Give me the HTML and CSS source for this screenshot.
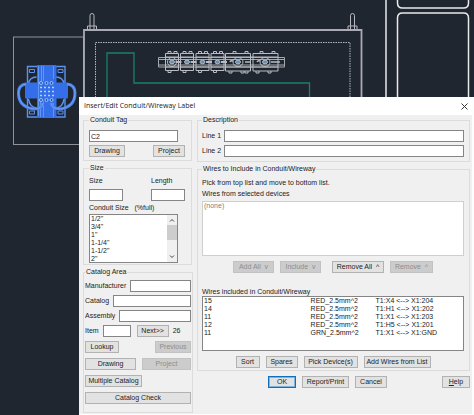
FILE: index.html
```html
<!DOCTYPE html>
<html lang="en">
<head>
<meta charset="utf-8">
<title>Insert/Edit Conduit/Wireway Label</title>
<link rel="stylesheet" href="styles.css">
</head>
<body>
<svg class="drawing" width="474" height="415" viewBox="0 0 474 415" fill="none" aria-hidden="true">
  <defs>
    <g id="terminal" stroke="#b9bcc2">
      <path d="M-6.500-8.500h13v17h-13zM-6.500-5h13M-6.500 5h13"/>
      <path d="M-4-9v-1.500h3V-9M2-9v-1.500h3V-9M-4 9v1.500h3V9"/>
      <ellipse cx="0" cy="0" rx="2.500" ry="1.800" fill="#5d92bd"/>
      <path d="M3.500 0h6" stroke-width="2"/>
    </g>
    <g id="pin" stroke="#b4b7bd">
      <path d="M-2 12.500V2q0-2 2-2t2 2v10.500M-4.500 16v-3.500h9V16M-2 12.500V16M2 12.500V16"/>
    </g>
  </defs>
  <rect x="13.500" y="37" width="70" height="107.500" stroke="#8f9298"/>
  <path d="M84 300V30H361.500V300" stroke="#aaa9b8" stroke-width="1.800"/>
  <path d="M95.500 300V42.500H350V300" stroke="#b5b8bd" stroke-dasharray="1.500 1"/>
  <path d="M107 300V53h27v30h175.500v217" stroke="#17806f" stroke-width="1.300"/>
  <use href="#pin" x="92" y="13.500"/>
  <use href="#pin" x="352.500" y="13.500"/>
  <path d="M158.500 57.500H284.500V67H158.500zM158.500 59.500H284.500M158.500 65H284.500" stroke="#a5a8af"/>
  <use href="#terminal" x="172" y="62"/>
  <use href="#terminal" x="187" y="62"/>
  <use href="#terminal" x="202.500" y="62"/>
  <use href="#terminal" x="217.500" y="62"/>
  <g stroke="#b9bcc2">
    <path d="M225.500 53.500h25v17.500h-25zM253 53.500h25v17.500h-25zM226 57h52M226 67h52"/>
    <path d="M233 53v-1.500h3V53M245 53v-1.500h3V53M260 53v-1.500h3V53M272 53v-1.500h3V53M229 71v2h3v-2M241 71v2h3v-2M245 71v2h3v-2M256 71v2h3v-2M268 71v2h3v-2"/>
    <path d="M230 62q1-2 3-1M257 62q1-2 3-1M245 62h6M271 62h9" stroke-width="1.500"/>
    <ellipse cx="238" cy="62" rx="5" ry="4.500"/>
    <ellipse cx="265" cy="62" rx="5" ry="4.500"/>
    <ellipse cx="172" cy="62" rx="4.500" ry="4.500"/>
    <ellipse cx="238" cy="62" rx="2.500" ry="1.800" fill="#5d92bd"/>
    <ellipse cx="265" cy="62" rx="2.500" ry="1.800" fill="#5d92bd"/>
  </g>
  <g stroke="#e8eaec" stroke-width="1.500">
    <path d="M386 0V300"/>
    <path d="M397.500 0v3q0 5 5 5h61q5 0 5-5V0"/>
    <path d="M397.500 300V18q0-5 5-5h61q5 0 5 5v282"/>
  </g>
  <g stroke="#5b93ee">
    <path d="M27.500 66.500h37.500v50.500H27.500z" stroke-width="1.400"/>
    <path d="M29.500 69.500h5v3h-5zM58 69.500h5v3h-5zM29.500 111h5v3h-5zM58 111h5v3h-5z"/>
    <path d="M28.500 84q1-7 8-7M64 84q-1-7-8-7M28.500 99q1 8 8 9M64 99q-1 8-8 9" stroke-width="1.500"/>
    <path d="M25.500 83h42v15h-42z" fill="#346ee8" stroke="#346ee8"/>
    <path d="M37.500 65.500h18.500V117H37.500z" fill="#346ee8" stroke="#346ee8"/>
    <path d="M38.500 66v50M41.500 66v15M43.500 66v15M40.500 101v16M43.500 101v16M53.500 66v13M53.500 103v14" stroke="#5f98f2"/>
    <path d="M26 84q-7.500 1-7.500 9 0 14 15.500 16 8 0 9-6M67 84q8 1 8 9 0 14-15 16-8 0-9-6" stroke="#4b83ee" stroke-width="3"/>
    <path d="M26 84q-7.500 1-7.500 9 0 14 15.500 16 8 0 9-6M67 84q8 1 8 9 0 14-15 16-8 0-9-6" stroke="#7aabf5" stroke-width=".7"/>
    <g fill="#2351b0" stroke="#a8cbfa" stroke-width=".9">
      <circle cx="41" cy="83" r="1.500"/><circle cx="46.500" cy="83" r="1.500"/><circle cx="51.500" cy="83" r="1.500"/>
      <circle cx="41" cy="100" r="1.500"/><circle cx="46.500" cy="100" r="1.500"/><circle cx="51.500" cy="100" r="1.500"/>
    </g>
    <path d="M40 87.500h14M40 91.500h14M40 95.500h14" stroke="#b5d2fa" stroke-width="1.500" stroke-dasharray="2 2"/>
  </g>
</svg>

<main class="dialog" role="dialog" aria-labelledby="dialog-title">
  <header class="titlebar">
    <h1 id="dialog-title">Insert/Edit Conduit/Wireway Label</h1>
    <button class="close" type="button" aria-label="Close"><svg width="7" height="7" viewBox="0 0 7 7" fill="none" stroke="#333"><path d="M.5.500l6 6M6.500.500l-6 6"/></svg></button>
  </header>
  <form class="body">
    <div class="column">
      <fieldset class="group tag">
        <legend>Conduit Tag</legend>
        <input class="field inset" type="text" value="C2" aria-label="Conduit tag">
        <div class="row spread">
          <button class="w36" type="button">Drawing</button>
          <button class="w32" type="button">Project</button>
        </div>
      </fieldset>

      <fieldset class="group size">
        <legend>Size</legend>
        <div class="row spread">
          <label class="stack">Size<input class="field" type="text"></label>
          <label class="stack">Length<input class="field" type="text"></label>
        </div>
        <label class="caption" for="conduit-size">Conduit Size &nbsp; (%full)</label>
        <div class="list inset sizes">
          <select id="conduit-size" size="6">
            <option>1/2"</option><option>3/4"</option><option>1"</option><option>1-1/4"</option><option>1-1/2"</option><option>2"</option>
          </select>
          <div class="scrollbar" aria-hidden="true">
            <svg width="10" height="10" viewBox="0 0 10 10" fill="none" stroke="#444"><path d="M3 6.500l2-2 2 2"/></svg>
            <div class="thumb"></div>
            <svg width="10" height="10" viewBox="0 0 10 10" fill="none" stroke="#444"><path d="M3 3.500l2 2 2-2"/></svg>
          </div>
        </div>
      </fieldset>

      <fieldset class="group catalog">
        <legend>Catalog Area</legend>
        <div class="rows entries">
          <div class="row"><label for="manufacturer">Manufacturer</label><input id="manufacturer" class="field" type="text"></div>
          <div class="row"><label for="catalog">Catalog</label><input id="catalog" class="field" type="text"></div>
          <div class="row"><label for="assembly">Assembly</label><input id="assembly" class="field" type="text"></div>
          <div class="row"><label for="item">Item</label><input id="item" class="field item" type="text"><button class="w32" type="button">Next&gt;&gt;</button><span>26</span></div>
        </div>
        <div class="rows actions">
          <div class="row spread"><button class="w34" type="button">Lookup</button><button class="w36" type="button" disabled>Previous</button></div>
          <div class="row halves"><button type="button">Drawing</button><button type="button" disabled>Project</button></div>
          <div class="row"><button class="w57" type="button">Multiple Catalog</button></div>
          <button type="button">Catalog Check</button>
        </div>
      </fieldset>
    </div>

    <div class="column">
      <fieldset class="group description">
        <legend>Description</legend>
        <div class="rows">
          <div class="row"><label for="line1">Line 1</label><input id="line1" class="field" type="text"></div>
          <div class="row"><label for="line2">Line 2</label><input id="line2" class="field" type="text"></div>
        </div>
      </fieldset>

      <fieldset class="group wires">
        <legend>Wires to Include in Conduit/Wireway</legend>
        <p>Pick from top list and move to bottom list.</p>
        <label class="caption" for="available">Wires from selected devices</label>
        <div class="list muted">
          <select id="available" size="6" disabled><option>(none)</option></select>
        </div>
        <div class="row move">
          <button class="w41" type="button" disabled>Add All &nbsp;v</button>
          <button class="w41" type="button" disabled>Include &nbsp;v</button>
          <button class="w52" type="button">Remove All &nbsp;^</button>
          <button class="w43" type="button" disabled>Remove &nbsp;^</button>
        </div>
        <div id="included">Wires included in Conduit/Wireway</div>
        <div class="list">
          <table aria-labelledby="included">
            <tbody>
              <tr><td>15</td><td>RED_2.5mm^2</td><td>T1:X4 &lt;--&gt; X1:204</td></tr>
              <tr><td>14</td><td>RED_2.5mm^2</td><td>T1:H1 &lt;--&gt; X1:202</td></tr>
              <tr><td>11</td><td>RED_2.5mm^2</td><td>T1:X1 &lt;--&gt; X1:203</td></tr>
              <tr><td>12</td><td>RED_2.5mm^2</td><td>T1:H5 &lt;--&gt; X1:201</td></tr>
              <tr><td>11</td><td>GRN_2.5mm^2</td><td>T1:X1 &lt;--&gt; X1:GND</td></tr>
            </tbody>
          </table>
        </div>
        <div class="row tools">
          <button class="w24" type="button">Sort</button>
          <button class="w32" type="button">Spares</button>
          <button class="w54" type="button">Pick Device(s)</button>
          <button class="w67" type="button">Add Wires from List</button>
        </div>
      </fieldset>

      <div class="row footer">
        <button class="w28 primary" type="submit">OK</button>
        <button class="w47" type="button">Report/Print</button>
        <button class="w32" type="button">Cancel</button>
        <button class="w28 help" type="button"><u>H</u>elp</button>
      </div>
    </div>
  </form>
</main>
</body>
</html>
```
FILE: styles.css
```css
* {
  box-sizing: border-box;
}

body {
  margin: 0;
  padding: 97px 0 0 79px;
  background: #20262f;
  color: #222;
  font: 7px/8px "Liberation Sans", sans-serif;
}

.drawing {
  position: absolute;
  top: 0;
  left: 0;
}

.dialog {
  position: relative;
  background: #f0f0f0;
  border: solid #fdfdfd;
  border-width: 0 2px 2px 0;
}

.titlebar {
  display: flex;
  align-items: center;
  justify-content: space-between;
  height: 18px;
  padding: 0 3px 0 5px;
  background: #fff;
}

h1 {
  margin: 0;
  font: 7px/10px "Open Sans", sans-serif;
}

.body {
  display: grid;
  grid-template-columns: 110px 1fr;
  gap: 4px;
  padding: 1px 2px 1px 4px;
}

.column,
.rows {
  display: flex;
  flex-direction: column;
  min-width: 0;
}

.column {
  gap: 3px;
}

.rows {
  gap: 3px;
}

.group {
  min-width: 0;
  margin: 0;
  padding: 6px 6px 3px 5px;
  border: 1px solid #dcdcdc;
}

legend {
  margin: 0;
  padding: 0 1px;
  line-height: 8px;
}

.row {
  display: flex;
  align-items: center;
  gap: 6px;
}

.spread {
  justify-content: space-between;
}

.field {
  display: block;
  flex: 1;
  min-width: 0;
  width: 100%;
  height: 12px;
  margin: 0;
  padding: 0 1px;
  border: 1px solid #858585;
  border-radius: 0;
  background: #fff;
  color: #222;
  font: inherit;
  outline: 0;
}

.inset {
  width: calc(100% - 7px);
}

button {
  flex: none;
  height: 12px;
  margin: 0;
  padding: 0;
  border: 1px solid #b2b2b2;
  border-radius: 0;
  background: #e2e2e2;
  color: #222;
  font: inherit;
  line-height: 10px;
  white-space: nowrap;
}

button:disabled {
  background: #cccccc;
  border-color: #c2c2c2;
  color: #8e8e8e;
}

.close {
  display: grid;
  place-items: center;
  width: 9px;
  height: 9px;
  border: 0;
  background: none;
}

.primary {
  border: 1px solid #0f6fbd;
  outline: 1px solid #7fb2dc;
  outline-offset: -2px;
}

.w24 { width: 24px; }
.w28 { width: 28px; }
.w32 { width: 32px; }
.w34 { width: 34px; }
.w36 { width: 36px; }
.w41 { width: 41px; }
.w43 { width: 43px; }
.w47 { width: 47px; }
.w52 { width: 52px; }
.w54 { width: 54px; }
.w57 { width: 57px; }
.w67 { width: 67px; }

.tag .row {
  margin-top: 3px;
}

.tag,
.size {
  margin-right: 1px;
}

.size {
  padding: 5px 6px 1px 5px;
}

.stack {
  display: grid;
  gap: 4px;
  width: 34px;
}

.caption {
  display: block;
}

.size .caption {
  margin: 3px 0 2px;
}

.list {
  display: flex;
  height: 55px;
  border: 1px solid #858585;
  background: #fff;
  overflow: hidden;
}

.sizes {
  height: 49px;
}

.muted {
  border-color: #cfcfcf;
}

select {
  flex: 1;
  min-width: 0;
  height: 100%;
  margin: 0;
  padding: 0;
  border: 0;
  border-radius: 0;
  background: #fff;
  color: #222;
  font: inherit;
  outline: 0;
  overflow: hidden;
}

select:disabled {
  color: #777;
  opacity: 1;
}

option {
  min-height: 8px;
  padding: 0 1px;
  font: inherit;
}

.scrollbar {
  display: flex;
  flex-direction: column;
  width: 10px;
  background: #f0f0f0;
}

.scrollbar svg {
  flex: none;
}

.thumb {
  height: 15px;
  margin-bottom: auto;
  background: #cdcdcd;
}

.catalog {
  padding: 4px 1px 8px;
}

.catalog .actions {
  gap: 5px;
  margin-top: 4px;
}

.entries .row {
  gap: 4px;
}

.entries .item {
  flex: 0 0 28px;
  margin-right: 2px;
}

.halves {
  display: grid;
  grid-template-columns: 51px 1fr;
}

.description {
  padding: 6px 5px 4px 4px;
}

.description .row {
  gap: 3px;
}

.description label {
  flex: none;
  white-space: nowrap;
}

.wires {
  padding: 6px 5px 2px 4px;
}

.wires p {
  margin: 0 0 3px;
}

.wires .caption {
  margin-bottom: 3px;
}

.move {
  justify-content: center;
  margin: 5px 0 15px;
}

.move .w52 {
  margin-left: 5px;
}

table {
  width: 100%;
  height: 40px;
  border-collapse: collapse;
  table-layout: fixed;
}

td {
  padding: 0 0 0 1px;
  white-space: nowrap;
}

td:first-child {
  width: 41%;
}

td:nth-child(2) {
  width: 25%;
}

.tools {
  justify-content: center;
  margin-top: 5px;
}

.footer {
  margin-top: 2px;
  padding-left: 71px;
}

.help {
  margin-left: auto;
}
```
